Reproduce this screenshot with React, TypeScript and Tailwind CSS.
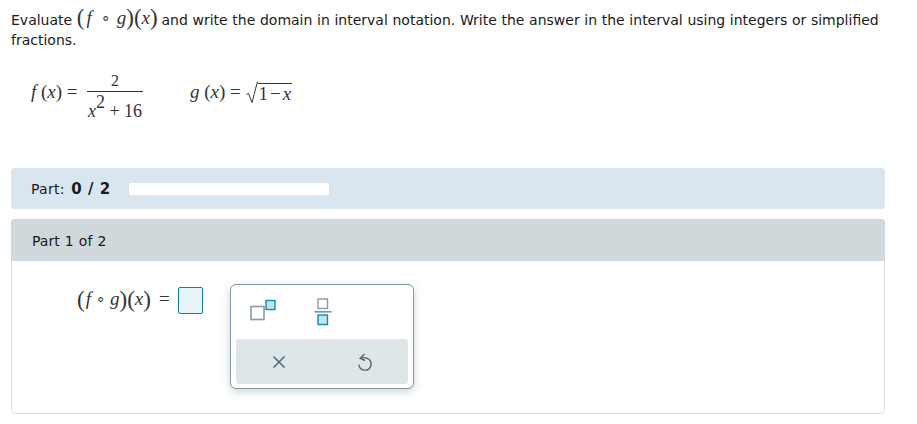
const serif = "font-['Liberation_Serif',serif]";

function Paren({ children }: { children: string }) {
  return <span className="font-['Liberation_Serif',serif] not-italic text-[23px] font-light leading-none">{children}</span>;
}

function SupBaseIcon() {
  return (
    <svg width="30" height="26" viewBox="0 0 30 26" fill="none">
      <rect x="1" y="7.5" width="13" height="13" fill="#fff" stroke="#8a9ba3" strokeWidth="1.6" />
      <rect x="16" y="1.5" width="9" height="9" fill="#bde6ec" stroke="#0e8fa6" strokeWidth="1.4" />
    </svg>
  );
}

function FractionIcon() {
  return (
    <svg width="18" height="28" viewBox="0 0 18 28" fill="none">
      <rect x="4" y="1" width="9.5" height="9.5" fill="#fff" stroke="#8a9ba3" strokeWidth="1.4" />
      <rect x="0.5" y="13" width="17" height="1.6" fill="#7f8f96" />
      <rect x="4" y="17" width="9.5" height="9.5" fill="#bde6ec" stroke="#0e8fa6" strokeWidth="1.4" />
    </svg>
  );
}

function CloseIcon() {
  return (
    <svg width="14" height="14" viewBox="0 0 14 14" fill="none" stroke="#4d6b78" strokeWidth="1.5">
      <path d="M1.5 1.5 12.5 12.5M12.5 1.5 1.5 12.5" />
    </svg>
  );
}

function UndoIcon() {
  return (
    <svg width="14" height="18" viewBox="0 0 14 18" fill="none" stroke="#4d6b78" strokeWidth="1.4">
      <path d="M6.5 1 2.2 5.2 7 7.5" />
      <path d="M2.4 5.2C5 4.3 7.5 4.5 9.5 5.7A6 6 0 1 1 1 11.5" />
    </svg>
  );
}

function Radical() {
  return (
    <svg width="12" height="23" viewBox="0 0 12 23" fill="none" stroke="#333" strokeWidth="1">
      <path d="M0.5 13.5 2.5 12.5 6 21.5 11.5 0.5" />
    </svg>
  );
}

export default function App() {
  return (
    <div className="w-[917px] h-[424px] overflow-hidden bg-white pl-[11px] pr-[32px] pt-[10px] font-['DejaVu_Sans',sans-serif] text-[14px] leading-[20px] text-[#1a1a1a]">
      <p className="[word-spacing:0.2px]">
        Evaluate{" "}
        <span className={`${serif} text-[19px] italic text-[#333] inline-flex items-center w-[80px] h-[14px] align-baseline`}>
          <Paren>(</Paren>
          <span className="ml-[2px]">f</span>
          <span className="not-italic text-[15px] ml-[9px] mr-[7px]">∘</span>
          <span>g</span>
          <Paren>)</Paren>
          <Paren>(</Paren>
          <span>x</span>
          <Paren>)</Paren>
        </span>{" "}
        and write the domain in interval notation. Write the answer in the interval using integers or simplified fractions.
      </p>

      <div className={`${serif} mt-[9px] ml-[20px] flex items-center h-[66px] text-[19px] text-[#333]`}>
        <span className="whitespace-pre w-[56px]">
          <i>f</i> (<i>x</i>) =
        </span>
        <span className="flex flex-col items-center w-[56px] leading-none">
          <span className="h-[24px] flex items-end pb-[2px] text-[16px]">2</span>
          <span className="w-full border-t border-[#333]" />
          <span className="h-[25px] pt-[10px] whitespace-pre text-[18px]">
            <i>x</i>
            <span className="relative -top-[9px] text-[18px]">2</span> + 16
          </span>
        </span>
        <span className="ml-[47px] flex items-center whitespace-pre">
          <span>
            <i>g</i> (<i>x</i>) ={" "}
          </span>
          <Radical />
          <span className="border-t border-[#333] leading-[20px] mt-[3px] pl-[1px] pr-[1px]">
            1<span className="mx-[2px]">−</span>
            <i>x</i>
          </span>
        </span>
      </div>

      <div className="mt-[43px] h-[41px] rounded-[4px] bg-[#d9e6f0] flex items-center pl-[20px]">
        <span className="w-[98px] [word-spacing:1px]">
          <span className="tracking-[0.3px]">Part:</span> <b className="ml-[1px] font-bold text-[15px]">0 / 2</b>
        </span>
        <div className="w-[200px] h-[12px] rounded-[2px] bg-white" />
      </div>

      <div className="mt-[10px] h-[195px] rounded-[4px] border border-[#d9dfe2]">
        <div className="-m-px h-[42px] rounded-t-[4px] bg-[#d0d8db] flex items-center pl-[21px] pt-px [word-spacing:0.7px]">
          Part 1 of 2
        </div>
        <div className="flex items-start pt-[27px] pl-[65px]">
          <div className={`${serif} flex items-center h-[24px] w-[101px] text-[19px] text-[#333] whitespace-pre`}>
            <Paren>(</Paren>
            <span className="italic ml-[1px]">f</span>
            <span className="text-[15px] ml-[5px] mr-[5px]">∘</span>
            <span className="italic">g</span>
            <Paren>)</Paren>
            <Paren>(</Paren>
            <span className="italic">x</span>
            <Paren>)</Paren>
            <span className="ml-[8px]">=</span>
          </div>
          <div className="w-[25px] h-[27px] rounded-[2px] border border-[#0e8397] bg-[#e6f4f8]" />
          <div className="ml-[27px] -mt-[3px] w-[184px] h-[105px] rounded-[6px] border border-[#7d9aa5] bg-white shadow-[0_3px_8px_rgba(90,120,130,0.3)] p-[5px]">
            <div className="flex h-[49px] items-start">
              <div className="w-[44px] pt-[9px] pl-[14px] box-content">
                <SupBaseIcon />
              </div>
              <div className="ml-[20px] pt-[8px]">
                <FractionIcon />
              </div>
            </div>
            <div className="h-[45px] rounded-[3px] bg-[#dfe6e8] flex items-center pl-[36px]">
              <CloseIcon />
              <div className="ml-[72px]">
                <UndoIcon />
              </div>
            </div>
          </div>
        </div>
      </div>
    </div>
  );
}
